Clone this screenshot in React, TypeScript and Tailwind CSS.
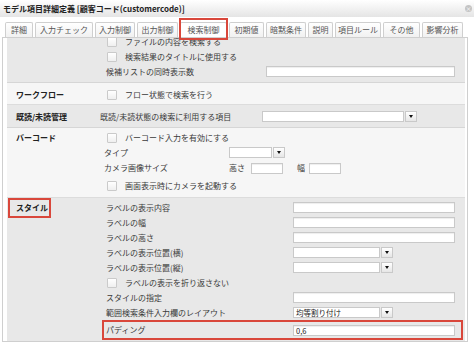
import React from 'react';

const tabs = [
  { label: '詳細', w: 'w-[28px]' },
  { label: '入力チェック', w: 'w-[58px]' },
  { label: '入力制御', w: 'w-[40px]' },
  { label: '出力制御', w: 'w-[41px]' },
  { label: '検索制御', w: 'w-[47px]', active: true },
  { label: '初期値', w: 'w-[35px]' },
  { label: '暗黙条件', w: 'w-[40px]' },
  { label: '説明', w: 'w-[25px]' },
  { label: '項目ルール', w: 'w-[46px]' },
  { label: 'その他', w: 'w-[37px]' },
  { label: '影響分析', w: 'w-[41px]' },
];

function Checkbox() {
  return <span className="inline-block w-[10px] h-[10px] shrink-0 border border-[#cacaca] bg-linear-to-b from-white to-[#efefef] rounded-[1px]" />;
}

function TextInput({ w, value }: { w: string; value?: string }) {
  return (
    <span className={`${w} h-[11px] border border-[#c9c9c9] bg-white shadow-[inset_0_1px_1px_rgba(0,0,0,0.07)] pl-[2px] text-[7.5px] leading-[9px] text-[#222]`}>
      {value}
    </span>
  );
}

function Select({ w, value }: { w: string; value?: string }) {
  return (
    <span className="flex items-center gap-[1px]">
      <span className={`${w} h-[11px] border border-[#c9c9c9] bg-white pl-[2px] text-[7.5px] leading-[9px] text-[#222]`}>{value}</span>
      <span className="w-[12px] h-[11px] border border-[#c9c9c9] bg-linear-to-b from-white to-[#e6e6e6] flex items-center justify-center">
        <span className="border-x-[2px] border-x-transparent border-t-[3px] border-t-[#111]" />
      </span>
    </span>
  );
}

function CheckLine({ text }: { text: string }) {
  return (
    <div className="flex items-center h-[15px] pl-[7px] gap-[8px]">
      <Checkbox />
      <span>{text}</span>
    </div>
  );
}

function Line({ label, lw, children, pl = 'pl-[6px]' }: { label: string; lw: string; children?: React.ReactNode; pl?: string }) {
  return (
    <div className={`flex items-center h-[15px] ${pl}`}>
      <span className={`${lw} shrink-0`}>{label}</span>
      {children}
    </div>
  );
}

export default function App() {
  return (
    <div className="w-[474px] h-[346px] bg-white overflow-hidden font-['Noto_Sans_CJK_JP',sans-serif] text-[8px] text-[#3a3a3a]">
      <div className="h-[17px] bg-linear-to-b from-white to-[#e5e5e5] flex items-center justify-between pl-[3px] pr-[2px]">
        <span className="font-bold text-[#222] leading-[10px]">モデル項目詳細定義 [顧客コード(customercode)]</span>
        <span className="w-[7px] h-[7px] rounded-full bg-[#c4c4c4] flex items-center justify-center text-white text-[6px] leading-none">×</span>
      </div>

      <div className="flex gap-[2px] pl-[5px] mt-[5px] h-[15px]">
        {tabs.map((t) => (
          <div
            key={t.label}
            className={`${t.w} relative h-[15px] flex items-center justify-center border border-b-0 border-[#cfcfcf] rounded-t-[2px] text-[#555] leading-none ${t.active ? 'bg-white' : 'bg-linear-to-b from-white to-[#f1f1f1]'}`}
          >
            {t.label}
            {t.active && <span className="absolute -left-[2px] -right-[2px] -top-[5px] -bottom-[3px] border-2 border-[#d9473b]" />}
          </div>
        ))}
      </div>

      <div className="ml-[2px] w-[466px] h-[305px] border border-[#cfcfcf] pl-[4px] pr-[2px] pb-[2px] overflow-hidden">
        {/* 検索制御 (continued, scrolled) */}
        <div className="grid grid-cols-[93px_1fr] bg-[#e8e8e8] border-b border-[#d6d6d6] h-[45px] overflow-hidden">
          <div />
          <div className="-mt-[4px]">
            <CheckLine text="ファイルの内容を検索する" />
            <CheckLine text="検索結果のタイトルに使用する" />
            <Line label="候補リストの同時表示数" lw="w-[160px]">
              <TextInput w="w-[189px]" />
            </Line>
          </div>
        </div>

        {/* ワークフロー */}
        <div className="grid grid-cols-[93px_1fr] bg-[#f6f6f6] border-b border-[#dcdcdc] pt-[4px] pb-[2px]">
          <div className="pl-[9px] font-bold text-[#222] leading-[15px]">ワークフロー</div>
          <CheckLine text="フロー状態で検索を行う" />
        </div>

        {/* 既読/未読管理 */}
        <div className="grid grid-cols-[93px_1fr] bg-[#e8e8e8] border-b border-[#d6d6d6] pt-[4px] pb-[3px]">
          <div className="pl-[9px] font-bold text-[#222] leading-[15px]">既読/未読管理</div>
          <Line label="既読/未読状態の検索に利用する項目" lw="w-[162px]" pl="pl-[0px]">
            <Select w="w-[142px]" />
          </Line>
        </div>

        {/* バーコード */}
        <div className="grid grid-cols-[93px_1fr] bg-[#f6f6f6] border-b border-[#dcdcdc] pt-[2px] pb-[4px]">
          <div className="pl-[9px] font-bold text-[#222] leading-[15px]">バーコード</div>
          <div>
            <CheckLine text="バーコード入力を有効にする" />
            <Line label="タイプ" lw="w-[125px]" pl="pl-[4px]">
              <Select w="w-[43px]" />
            </Line>
            <div className="flex items-center h-[16px] pl-[4px]">
              <span className="w-[125px] shrink-0">カメラ画像サイズ</span>
              <span className="w-[22px]">高さ</span>
              <TextInput w="w-[32px]" />
              <span className="ml-[14px] w-[12px]">幅</span>
              <TextInput w="w-[32px]" />
            </div>
            <div className="mt-[2px]">
              <CheckLine text="画面表示時にカメラを起動する" />
            </div>
          </div>
        </div>

        {/* スタイル */}
        <div className="grid grid-cols-[93px_1fr] bg-[#e8e8e8] pt-[2px] pb-[1px]">
          <div className="pl-[1px] -mt-[2px]">
            <div className="w-[43px] h-[20px] border-2 border-[#d9473b] flex items-center pl-[6px] font-bold text-[#222]">スタイル</div>
          </div>
          <div>
            <Line label="ラベルの表示内容" lw="w-[187px]"><TextInput w="w-[162px]" /></Line>
            <Line label="ラベルの幅" lw="w-[187px]"><TextInput w="w-[162px]" /></Line>
            <Line label="ラベルの高さ" lw="w-[187px]"><TextInput w="w-[162px]" /></Line>
            <Line label="ラベルの表示位置(横)" lw="w-[187px]"><Select w="w-[87px]" /></Line>
            <Line label="ラベルの表示位置(縦)" lw="w-[187px]"><Select w="w-[87px]" /></Line>
            <CheckLine text="ラベルの表示を折り返さない" />
            <Line label="スタイルの指定" lw="w-[187px]"><TextInput w="w-[162px]" /></Line>
            <Line label="範囲検索条件入力欄のレイアウト" lw="w-[187px]"><Select w="w-[87px]" value="均等割り付け" /></Line>
            <div className="ml-[2px] mr-[2px] h-[20px] border-2 border-[#d9473b] flex items-center pl-[2px]">
              <span className="w-[187px] shrink-0">パディング</span>
              <TextInput w="w-[162px]" value="0,6" />
            </div>
          </div>
        </div>
      </div>
    </div>
  );
}
